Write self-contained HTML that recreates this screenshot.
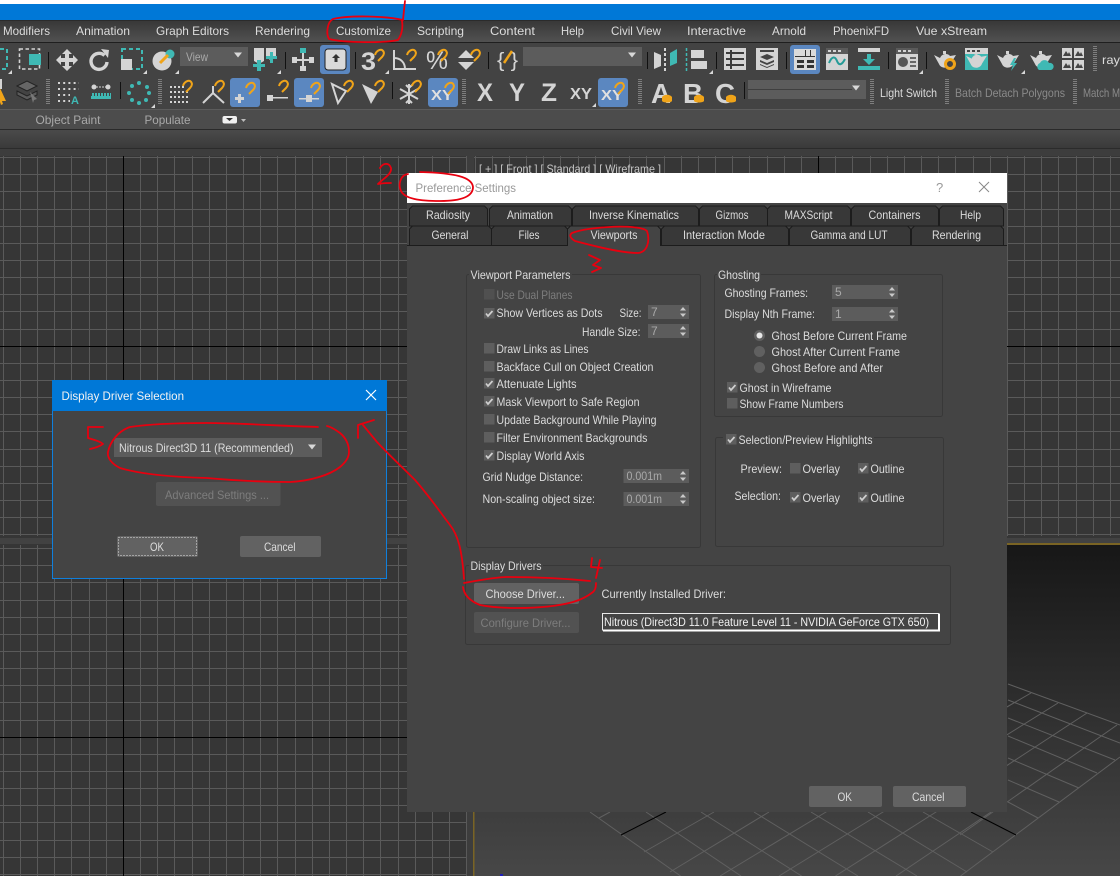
<!DOCTYPE html>
<html><head><meta charset="utf-8"><title>Display driver selection</title>
<style>
html,body{margin:0;padding:0;background:#363636;width:1120px;height:876px;overflow:hidden}
svg{display:block;font-family:"Liberation Sans",sans-serif;font-size:12px;overflow:hidden}
text{fill:#dcdcdc;white-space:pre}
.d{fill:#7d7d7d}
.s{fill:#a9a9a9}
.g{fill:#d4d4d4}
.t{fill:#3fb9b4}
.r{fill:none;stroke:#e8000f;stroke-width:1.8;stroke-linecap:round;stroke-linejoin:round}
.ln{fill:none;stroke:#5a5a5a;stroke-width:1}
.p{fill:none;stroke:#606060;stroke-width:1}
.bx{fill:none;stroke:#383838;stroke-width:1}
.tab{fill:#383838;stroke:#1c1c1c;stroke-width:1}
</style></head><body>
<svg width="1120" height="876" viewBox="0 0 1120 876" xmlns="http://www.w3.org/2000/svg">
<defs>
<linearGradient id="menu" x1="0" y1="0" x2="0" y2="1"><stop offset="0" stop-color="#383838"/><stop offset="1" stop-color="#515151"/></linearGradient>
<linearGradient id="bar2" x1="0" y1="0" x2="0" y2="1"><stop offset="0" stop-color="#4a4a4a"/><stop offset="1" stop-color="#3a3a3a"/></linearGradient>
<linearGradient id="persp" x1="0" y1="0" x2="0" y2="1"><stop offset="0" stop-color="#171717"/><stop offset="1" stop-color="#474747"/></linearGradient>
<path id="m" fill="none" stroke="#f0a419" stroke-width="2" d="M0 5C1 1 5-1 7 0C10 2 9 5 7 7L3 11"/>
<path id="f" fill="#d8d8d8" d="M4 0V4H0z"/>
<g id="c0"><rect width="10.5" height="10.5" fill="#5e5e5e"/></g>
<g id="c1"><rect width="10.5" height="10.5" fill="#5e5e5e"/><path d="M2 5.5L4 8L8.5 3" fill="none" stroke="#cfcfcf" stroke-width="1.7"/></g>
<path id="arr" fill="#c8c8c8" d="M-3 -1.5L0-5L3-1.5zM-3 1.5L0 5L3 1.5z"/>
<path id="dn" fill="#d8d8d8" d="M-4-2.5H4L0 2.5z"/>
<g id="dot"><path stroke="#b8b8b8" stroke-width="1" stroke-dasharray="1 1" fill="none" d="M0 0V26M2 0V26"/></g>
<g id="pot"><path class="g" d="M0 5L6 8C8 3 14 3 16 6L22 5L17 13C15 19 7 19 5 14z"/><path class="g" d="M9 1h3v3H9z"/></g>
<g id="hd"><rect width="22" height="6" fill="#5a5a5a"/><path fill="#d4d4d4" d="M2 2h3v2H2zM7 2h3v2H7zM12 2h3v2h-3z"/></g>
<g id="ph"><rect width="10" height="10" class="g"/><path fill="#444" d="M1 8l3-5 2 3 1-2 2 4z"/></g>
</defs>

<!-- top bars -->
<rect width="1120" height="4" fill="#fff"/>
<rect y="4" width="1120" height="16" fill="#0078d7"/>
<rect y="20" width="1120" height="1" fill="#2b2b2b"/>
<rect y="21" width="1120" height="21" fill="url(#menu)"/>
<rect y="42" width="1120" height="1" fill="#1f1f1f"/>
<rect y="43" width="1120" height="66" fill="#434343"/>
<rect y="109" width="1120" height="1" fill="#5c5c5c"/>
<rect y="110" width="1120" height="19" fill="#4c4c4c"/>
<rect y="129" width="1120" height="1" fill="#2a2a2a"/>
<rect y="130" width="1120" height="18" fill="url(#bar2)"/>
<rect y="148" width="1120" height="1" fill="#2b2b2b"/>
<rect y="149" width="1120" height="7" fill="#3d3d3d"/>

<!-- menu -->
<text x="3" y="35" textLength="47" lengthAdjust="spacingAndGlyphs">Modifiers</text>
<text x="76" y="35" textLength="54" lengthAdjust="spacingAndGlyphs">Animation</text>
<text x="156" y="35" textLength="73" lengthAdjust="spacingAndGlyphs">Graph Editors</text>
<text x="255" y="35" textLength="55" lengthAdjust="spacingAndGlyphs">Rendering</text>
<text x="336" y="35" textLength="55" lengthAdjust="spacingAndGlyphs">Customize</text>
<text x="417" y="35" textLength="47" lengthAdjust="spacingAndGlyphs">Scripting</text>
<text x="490" y="35" textLength="45" lengthAdjust="spacingAndGlyphs">Content</text>
<text x="561" y="35" textLength="23" lengthAdjust="spacingAndGlyphs">Help</text>
<text x="611" y="35" textLength="50" lengthAdjust="spacingAndGlyphs">Civil View</text>
<text x="687" y="35" textLength="59" lengthAdjust="spacingAndGlyphs">Interactive</text>
<text x="772" y="35" textLength="34" lengthAdjust="spacingAndGlyphs">Arnold</text>
<text x="833" y="35" textLength="56" lengthAdjust="spacingAndGlyphs">PhoenixFD</text>
<text x="916" y="35" textLength="71" lengthAdjust="spacingAndGlyphs">Vue xStream</text>

<!-- toolbar row 1 -->
<path d="M0 49H7V69H0" fill="none" stroke="#3fb9b4" stroke-width="2" stroke-dasharray="4 3"/>
<rect x="19.5" y="49" width="20" height="20" fill="none" stroke="#d4d4d4" stroke-width="1.6" stroke-dasharray="3.5 2.5"/>
<rect x="29" y="54" width="12" height="11" class="t"/>
<use href="#f" x="8" y="70"/>
<rect x="48" y="52" width="1" height="17" fill="#111"/>
<path class="g" d="M67 49l5 5h-3v4h4v-3l5 5-5 5v-3h-4v4h3l-5 5-5-5h3v-4h-4v3l-5-5 5-5v3h4v-4h-3z"/>
<path fill="none" stroke="#d4d4d4" stroke-width="3.4" d="M104.5 55.5A8 8 0 1 0 107 62"/>
<path class="g" d="M101 49l8 1-1 8z"/>
<rect x="122" y="49" width="20" height="20" fill="none" stroke="#3fb9b4" stroke-width="2" stroke-dasharray="4 3"/>
<rect x="121" y="59" width="11" height="11" class="g"/>
<use href="#f" x="143" y="70"/>
<circle cx="162" cy="61" r="9.5" class="g"/><circle cx="170" cy="54" r="4.5" class="t"/>
<path d="M160 63l8-8" stroke="#f0a419" stroke-width="3"/>
<use href="#f" x="175" y="70"/>
<rect x="180" y="47" width="68" height="19" fill="#5c5c5c"/>
<text x="186" y="61" class="s" textLength="22" lengthAdjust="spacingAndGlyphs">View</text>
<use href="#dn" x="238" y="55"/>
<path class="g" d="M254 48h10v13l-5 3-5-3zM266 48h10v8l-5 5-5-5z"/>
<path class="t" d="M257 60h4v4h4v3h-4v4h-4v-4h-4v-3h4zM270 52h3v4h4v3h-4v4h-3v-4h-4v-3h4z"/>
<use href="#f" x="277" y="70"/>
<rect x="285" y="52" width="1" height="17" fill="#111"/>
<path fill="none" stroke="#d4d4d4" stroke-width="2" d="M303 52V70M293 60H313"/>
<rect x="300" y="48" width="6" height="5" class="t"/><rect x="292" y="57" width="5" height="6" class="g"/><rect x="309" y="57" width="5" height="6" class="g"/><rect x="300" y="66" width="6" height="5" class="g"/>
<rect x="320" y="45" width="30" height="29" rx="3" fill="#5b87c0"/>
<rect x="325" y="49" width="21" height="21" rx="3" fill="#dadada" stroke="#222"/>
<path fill="#333" d="M332 58l4-4 4 4h-2.5v4h-3v-4z"/>
<rect x="355" y="52" width="1" height="17" fill="#111"/>
<text x="361" y="70" style="font-size:25px;font-weight:bold;fill:#d4d4d4" textLength="15" lengthAdjust="spacingAndGlyphs">3</text><use href="#m" x="375" y="50"/>
<use href="#f" x="385" y="70"/>
<path fill="none" stroke="#d4d4d4" stroke-width="2" d="M394 50V69H416M394 58C401 58 405 63 405 69"/><use href="#m" x="407" y="50"/>
<text x="426" y="69" style="font-size:25px;fill:#d4d4d4" textLength="22" lengthAdjust="spacingAndGlyphs">%</text><use href="#m" x="438" y="50"/>
<path class="g" d="M458 58l8-8 8 8zM458 62h16l-8 8z"/><use href="#m" x="471" y="50"/>
<rect x="488" y="52" width="1" height="17" fill="#111"/>
<text x="497" y="67" style="font-size:20px;fill:#d4d4d4" textLength="21" lengthAdjust="spacingAndGlyphs">{ }</text>
<path d="M504 63l8-12" stroke="#f0a419" stroke-width="2.5"/>
<rect x="523" y="47" width="119" height="19" fill="#5c5c5c"/><use href="#dn" x="632" y="55"/>
<rect x="647" y="52" width="1" height="17" fill="#111"/>
<path class="g" d="M654 52l7 3v11l-7 3z"/><path class="t" d="M677 49l-7 4v13l7-3z"/><path stroke="#d4d4d4" stroke-width="2" stroke-dasharray="3 2" d="M665 48V72"/>
<path stroke="#3fb9b4" stroke-width="1.5" stroke-dasharray="3 2" d="M686.5 48V71"/>
<rect x="691" y="50" width="13" height="8" class="g"/><rect x="691" y="61" width="16" height="8" class="g"/><use href="#f" x="709" y="70"/>
<rect x="716" y="52" width="1" height="17" fill="#111"/>
<rect x="724" y="48" width="22" height="22" class="g"/>
<path stroke="#3c3c3c" stroke-width="2" d="M726 53H744M726 59H744M726 65H744M731 50V69"/>
<rect x="756" y="48" width="22" height="22" class="g"/>
<path fill="#444" d="M760 50h14v2h-14zM767 54l7 3-7 3-7-3zM760 60l7 3 7-3v2l-7 3-7-3zM760 64l7 3 7-3v1l-7 3-7-3z"/>
<rect x="786" y="52" width="1" height="17" fill="#111"/>
<rect x="790" y="45" width="30" height="29" rx="3" fill="#5b87c0"/>
<rect x="794" y="49" width="22" height="21" fill="#dadada"/>
<path fill="#333" d="M795 56h20v1h-20zM805 50h1v6h-1zM810 50h1v6h-1zM797 60h7v3h-7zM807 60h7v3h-7zM797 65h7v3h-7zM807 65h7v3h-7z"/>
<rect x="826" y="48" width="22" height="22" class="g"/><use href="#hd" x="826" y="48"/>
<path d="M829 63c3-7 6-7 8-2s5 4 8-2" fill="none" stroke="#259b97" stroke-width="2"/>
<rect x="858" y="48" width="22" height="4" class="g"/><rect x="858" y="66" width="22" height="4" class="t"/>
<path class="t" d="M867 54h4v5h4l-6 6-6-6h4z"/>
<rect x="888" y="52" width="1" height="17" fill="#111"/>
<rect x="896" y="48" width="22" height="22" class="g"/><use href="#hd" x="896" y="48"/>
<circle cx="903" cy="62" r="5" fill="#555"/><path stroke="#444" stroke-width="1.5" d="M910 58h6M910 62h6M910 66h6"/>
<use href="#f" x="919" y="70"/>
<rect x="926" y="52" width="1" height="17" fill="#111"/>
<use href="#pot" x="934" y="50"/><circle cx="950" cy="64" r="4.5" fill="#434343" stroke="#f0a419" stroke-width="3"/>
<rect x="965" y="48" width="23" height="22" class="t"/><rect x="965" y="48" width="23" height="6" class="g"/><path fill="#444" d="M967 50h3v2h-3zM972 50h3v2h-3zM977 50h3v2h-3z"/>
<g transform="translate(966 51) scale(.95)"><use href="#pot"/></g>
<use href="#pot" x="997" y="50"/><path fill="#3fb9b4" d="M1014 58l-4 7h3l-2 6 6-8h-3l2-5z"/>
<use href="#f" x="1021" y="70"/>
<use href="#pot" x="1030" y="50"/><path class="t" d="M1039 70a4 4 0 0 1 1-7a5 5 0 0 1 9 0a3.5 3.5 0 0 1 2 7z"/>
<use href="#ph" x="1062" y="48"/><use href="#ph" x="1074" y="48"/><use href="#ph" x="1062" y="60"/><use href="#ph" x="1074" y="60"/>
<use href="#dot" x="1094" y="46"/>
<text x="1102" y="64" textLength="18" lengthAdjust="spacingAndGlyphs">ray</text>

<!-- toolbar row 2 -->
<path fill="#f0a419" d="M0 88l6 13h-4l1 3-2 1-1-3z"/><rect x="0" y="79" width="2" height="10" fill="#d4d4d4"/>
<path fill="#666" stroke="#222" d="M17 86l10-5 10 5-10 5z"/><path fill="#5a5a5a" stroke="#222" d="M17 91l10 5 10-5 0 4-10 5-10-5z"/>
<path fill="#777" d="M30 92l7 7-3 1-1 3z"/>
<use href="#dot" x="47" y="79"/>
<path stroke="#d4d4d4" stroke-width="2" stroke-dasharray="2 3.2" d="M58 83H79M58 89H79M58 95H70M58 101H70"/>
<text x="71" y="104" style="font-weight:bold;font-size:11px;fill:#3fb9b4">A</text>
<circle cx="94" cy="87" r="2.5" class="g"/><circle cx="108" cy="87" r="2.5" class="g"/><path stroke="#d4d4d4" stroke-dasharray="2 1" d="M96 87h10"/>
<path class="t" d="M91 93h20v6H91z"/><path stroke="#434343" stroke-dasharray="1 2" stroke-width="3" d="M91 94.5h20"/>
<rect x="120" y="82" width="1" height="17" fill="#111"/>
<g class="t"><circle cx="139" cy="83" r="2"/><circle cx="147" cy="87" r="2"/><circle cx="149" cy="93" r="2"/><circle cx="146" cy="100" r="2"/><circle cx="139" cy="103" r="2"/><circle cx="132" cy="100" r="2"/><circle cx="129" cy="93" r="2"/><circle cx="132" cy="86" r="2"/></g>
<use href="#f" x="151" y="104"/>
<use href="#dot" x="159" y="79"/>
<path stroke="#d4d4d4" stroke-width="2" stroke-dasharray="2 2" d="M170 87H186M170 92H190M170 97H190M170 102H190"/><use href="#m" x="183" y="81"/>
<path fill="none" stroke="#d4d4d4" stroke-width="2" d="M213 93V86M213 93L203 103M213 93L224 103"/><use href="#m" x="215" y="81"/>
<rect x="230" y="78" width="30" height="29" rx="3" fill="#5b87c0"/><use href="#m" x="246" y="83"/>
<path class="g" d="M238 94h3v3h3v3h-3v3h-3v-3h-3v-3h3z"/>
<use href="#m" x="279" y="81"/><rect x="267" y="95" width="6" height="6" class="g"/><rect x="272" y="97" width="16" height="1.5" class="g"/>
<rect x="294" y="78" width="30" height="29" rx="3" fill="#5b87c0"/><use href="#m" x="311" y="83"/>
<rect x="299" y="98" width="20" height="1.5" class="g"/><rect x="306" y="95" width="6" height="7" class="g"/>
<path fill="none" stroke="#d4d4d4" stroke-width="2" d="M332 84L346 91L338 103z"/><use href="#m" x="344" y="81"/>
<path class="g" d="M362 84L378 92L371 104z"/><use href="#m" x="375" y="81"/>
<rect x="392" y="82" width="1" height="17" fill="#111"/>
<path stroke="#d4d4d4" stroke-width="2" fill="none" d="M409 84V104M400 89L418 99M400 99L418 89M406 85l3 3 3-3M406 103l3-3 3 3"/><use href="#m" x="412" y="81"/>
<rect x="428" y="78" width="30" height="29" rx="3" fill="#5b87c0"/>
<text x="431" y="100" style="font-weight:bold;font-size:15px;fill:#e0e0e0" textLength="22" lengthAdjust="spacingAndGlyphs">XY</text><use href="#m" x="445" y="83"/>
<use href="#dot" x="463" y="79"/>
<text x="477" y="101" style="font-weight:bold;font-size:25px;fill:#d4d4d4" textLength="16" lengthAdjust="spacingAndGlyphs">X</text>
<text x="509" y="101" style="font-weight:bold;font-size:25px;fill:#d4d4d4" textLength="16" lengthAdjust="spacingAndGlyphs">Y</text>
<text x="541" y="101" style="font-weight:bold;font-size:25px;fill:#d4d4d4" textLength="16" lengthAdjust="spacingAndGlyphs">Z</text>
<text x="570" y="99" style="font-weight:bold;font-size:16px;fill:#d4d4d4" textLength="22" lengthAdjust="spacingAndGlyphs">XY</text>
<use href="#f" x="592" y="103"/>
<rect x="598" y="78" width="30" height="29" rx="3" fill="#5b87c0"/>
<text x="601" y="100" style="font-weight:bold;font-size:15px;fill:#e0e0e0" textLength="22" lengthAdjust="spacingAndGlyphs">XY</text><use href="#m" x="615" y="83"/>
<use href="#dot" x="639" y="79"/>
<text x="651" y="103" style="font-weight:bold;font-size:28px;fill:#d4d4d4" textLength="20" lengthAdjust="spacingAndGlyphs">A</text>
<text x="683" y="103" style="font-weight:bold;font-size:28px;fill:#d4d4d4" textLength="20" lengthAdjust="spacingAndGlyphs">B</text>
<text x="715" y="103" style="font-weight:bold;font-size:28px;fill:#d4d4d4" textLength="20" lengthAdjust="spacingAndGlyphs">C</text>
<g fill="#f0a419"><path d="M662 97c2-3 8-3 10 0v4c-1 2-9 2-10 0z"/><path d="M694 97c2-3 8-3 10 0v4c-1 2-9 2-10 0z"/><path d="M726 97c2-3 8-3 10 0v4c-1 2-9 2-10 0z"/></g>
<rect x="744" y="82" width="1" height="17" fill="#111"/>
<rect x="748" y="80" width="118" height="19" fill="#5c5c5c"/><rect x="748" y="89" width="104" height="1" fill="#3f3f3f"/><use href="#dn" x="856" y="88"/>
<use href="#dot" x="871" y="79"/>
<text x="880" y="97" textLength="57" lengthAdjust="spacingAndGlyphs">Light Switch</text>
<use href="#dot" x="946" y="79"/>
<text x="955" y="97" style="fill:#8a8a8a" textLength="110" lengthAdjust="spacingAndGlyphs">Batch Detach Polygons</text>
<use href="#dot" x="1074" y="79"/>
<text x="1083" y="97" style="fill:#8a8a8a" textLength="37" lengthAdjust="spacingAndGlyphs">Match M</text>

<!-- ribbon -->
<text x="35.5" y="124" class="s" textLength="65" lengthAdjust="spacingAndGlyphs">Object Paint</text>
<text x="144.5" y="124" class="s" textLength="46" lengthAdjust="spacingAndGlyphs">Populate</text>
<rect x="222.5" y="116" width="14.5" height="7.5" rx="2" fill="#f0f0f0"/><path fill="#333" d="M226 118h7l-3.5 3z"/><path fill="#bbb" d="M241 119h5l-2.5 3z"/>

<!-- viewports -->
<rect x="0" y="156" width="467" height="382" fill="#363636"/>
<rect x="474" y="156" width="646" height="382" fill="#363636"/>
<rect x="0" y="538" width="1120" height="6" fill="#424242"/>
<rect x="467" y="156" width="7" height="720" fill="#3d3d3d"/>
<rect x="0" y="544" width="467" height="332" fill="#363636"/>
<!-- top-left grid -->
<path class="ln" d="M3.5 156V536M20.5 156V536M37.5 156V536M54.5 156V536M71.5 156V536M89.5 156V536M106.5 156V536M140.5 156V536M157.5 156V536M174.5 156V536M192.5 156V536M209.5 156V536M226.5 156V536M243.5 156V536M260.5 156V536M277.5 156V536M295.5 156V536M312.5 156V536M329.5 156V536M346.5 156V536M363.5 156V536M380.5 156V536M398.5 156V536M415.5 156V536M432.5 156V536M449.5 156V536M466.5 156V536"/>
<path class="ln" d="M0 157.5H467M0 174.5H467M0 191.5H467M0 209.5H467M0 226.5H467M0 243.5H467M0 260.5H467M0 277.5H467M0 294.5H467M0 311.5H467M0 329.5H467M0 363.5H467M0 380.5H467M0 397.5H467M0 414.5H467M0 431.5H467M0 449.5H467M0 466.5H467M0 483.5H467M0 500.5H467M0 517.5H467M0 534.5H467"/>
<!-- bottom-left grid -->
<path class="ln" d="M3.5 545V876M20.5 545V876M37.5 545V876M54.5 545V876M71.5 545V876M89.5 545V876M106.5 545V876M140.5 545V876M157.5 545V876M174.5 545V876M192.5 545V876M209.5 545V876M226.5 545V876M243.5 545V876M260.5 545V876M277.5 545V876M295.5 545V876M312.5 545V876M329.5 545V876M346.5 545V876M363.5 545V876M380.5 545V876M398.5 545V876M415.5 545V876M432.5 545V876M449.5 545V876M466.5 545V876"/>
<path class="ln" d="M0 548.5H467M0 565.5H467M0 582.5H467M0 600.5H467M0 617.5H467M0 634.5H467M0 651.5H467M0 668.5H467M0 685.5H467M0 702.5H467M0 720.5H467M0 754.5H467M0 771.5H467M0 788.5H467M0 805.5H467M0 822.5H467M0 840.5H467M0 857.5H467M0 874.5H467"/>
<path stroke="#000" stroke-width="1" d="M123.5 156V536M123.5 545V876M0 346.5H467M0 737.5H467"/>
<path class="ln" d="M474 157.5H1120M474 174.5H1120M474 191.5H1120M474 209.5H1120M474 226.5H1120M474 243.5H1120M474 260.5H1120M474 277.5H1120M474 294.5H1120M474 311.5H1120M474 329.5H1120M474 363.5H1120M474 380.5H1120M474 397.5H1120M474 414.5H1120M474 431.5H1120M474 449.5H1120M474 466.5H1120M474 483.5H1120M474 500.5H1120M474 517.5H1120M474 534.5H1120"/>
<path class="ln" d="M475.5 156V536M492.5 156V536M509.5 156V536M526.5 156V536M543.5 156V536M560.5 156V536M578.5 156V536M595.5 156V536M612.5 156V536M629.5 156V536M646.5 156V536M664.5 156V536M681.5 156V536M698.5 156V536M715.5 156V536M732.5 156V536M749.5 156V536M767.5 156V536M784.5 156V536M801.5 156V536M835.5 156V536M852.5 156V536M870.5 156V536M887.5 156V536M904.5 156V536M921.5 156V536M938.5 156V536M955.5 156V536M973.5 156V536M990.5 156V536M1007.5 156V536M1024.5 156V536M1041.5 156V536M1058.5 156V536M1076.5 156V536M1093.5 156V536M1110.5 156V536"/>
<path stroke="#000" d="M818.5 156V536M474 346.5H1120"/>
<rect x="474" y="538" width="646" height="5" fill="#424242"/>
<text x="479" y="173" style="fill:#c8c8c8" textLength="182" lengthAdjust="spacingAndGlyphs">[ + ] [ Front ] [ Standard ] [ Wireframe ]</text>
<rect x="474" y="545" width="646" height="331" fill="url(#persp)"/>
<rect x="474" y="543" width="646" height="2" fill="#7a6424"/>
<rect x="473" y="543" width="1.5" height="333" fill="#7a6424"/>
<path class="p" d="M590 812L680.6 876M646 812L741 876M701 812L801.6 876M754 812L858 876M811 812L917 876M868 812L967 872M923 812L993 852M1008 802L1038 818M1008 780L1059 802M1008 758L1079 788M1008 736L1097 773M1008 718L1115 760M1008 700L1120 743M1008 684L1120 725"/>
<path class="p" d="M1120 757L960.5 876M991 812L896 876M1117 725L960 835M936 812L835.4 876M1087 713L936 812M883 812L779 876M1058 703L883 812M826 812L720 876M1031 693L826 812M769 812L670 872M714 812L644 852M610 812L599 818"/>
<path stroke="#000" d="M971 812L1016 835M666 812L621 835"/>
<path stroke="#1010e0" stroke-width="1.5" d="M500 875h3"/>

<!-- Preference dialog -->
<rect x="407" y="173" width="600" height="639" fill="#444444"/>
<rect x="407" y="173" width="600" height="30" fill="#ffffff"/>
<text x="415.5" y="192" style="fill:#999" textLength="100.5" lengthAdjust="spacingAndGlyphs">Preference Settings</text>
<text x="936" y="192" style="fill:#999;font-size:13px">?</text>
<path stroke="#888" stroke-width="1" d="M979 182L989 192M989 182L979 192"/>
<!-- tabs -->
<g>
<path class="tab" d="M409.5 226V209l3-3h72l3 3V226z"/>
<path class="tab" d="M489.5 226V209l3-3h76l3 3V226z"/>
<path class="tab" d="M572.5 226V209l3-3h120l3 3V226z"/>
<path class="tab" d="M699.5 226V209l3-3h62l3 3V226z"/>
<path class="tab" d="M767.5 226V209l3-3h77l3 3V226z"/>
<path class="tab" d="M851.5 226V209l3-3h81l3 3V226z"/>
<path class="tab" d="M939.5 226V209l3-3h58l3 3V226z"/>
<rect x="407" y="245" width="600" height="1" fill="#1c1c1c"/>
<path class="tab" d="M409.5 245.5V229l3-3h76l3 3V245.5z"/>
<path class="tab" d="M491.5 245.5V229l3-3h70l3 3V245.5z"/>
<path class="tab" d="M661.5 245.5V229l3-3h121l3 3V245.5z"/>
<path class="tab" d="M789.5 245.5V229l3-3h115l3 3V245.5z"/>
<path class="tab" d="M911.5 245.5V229l3-3h86l3 3V245.5z"/>
<path fill="#444" stroke="#1c1c1c" d="M567.5 246V229l3-3h87l3 3V246"/>
<rect x="568" y="245" width="92" height="2" fill="#444"/>
</g>
<text x="426" y="219" textLength="44" lengthAdjust="spacingAndGlyphs">Radiosity</text>
<text x="507" y="219" textLength="46" lengthAdjust="spacingAndGlyphs">Animation</text>
<text x="589" y="219" textLength="90" lengthAdjust="spacingAndGlyphs">Inverse Kinematics</text>
<text x="715.5" y="219" textLength="33" lengthAdjust="spacingAndGlyphs">Gizmos</text>
<text x="784.5" y="219" textLength="48" lengthAdjust="spacingAndGlyphs">MAXScript</text>
<text x="868.5" y="219" textLength="52" lengthAdjust="spacingAndGlyphs">Containers</text>
<text x="960" y="219" textLength="21" lengthAdjust="spacingAndGlyphs">Help</text>
<text x="431.5" y="239" textLength="37" lengthAdjust="spacingAndGlyphs">General</text>
<text x="518.5" y="239" textLength="21" lengthAdjust="spacingAndGlyphs">Files</text>
<text x="590.5" y="239" textLength="47" lengthAdjust="spacingAndGlyphs">Viewports</text>
<text x="683" y="239" textLength="82" lengthAdjust="spacingAndGlyphs">Interaction Mode</text>
<text x="810.5" y="239" textLength="77" lengthAdjust="spacingAndGlyphs">Gamma and LUT</text>
<text x="932" y="239" textLength="49" lengthAdjust="spacingAndGlyphs">Rendering</text>

<!-- group boxes -->
<rect x="466.5" y="274.5" width="234" height="273" rx="2" class="bx"/>
<rect x="714.5" y="274.5" width="228" height="142" rx="2" class="bx"/>
<rect x="715.5" y="437.5" width="228" height="109" rx="2" class="bx"/>
<rect x="465.5" y="565.5" width="485" height="79" rx="2" class="bx"/>
<rect x="469" y="270" width="103" height="8" fill="#444"/>
<rect x="717" y="270" width="44" height="8" fill="#444"/>
<rect x="723" y="434" width="151" height="8" fill="#444"/>
<rect x="469" y="561" width="74" height="8" fill="#444"/>
<text x="470.5" y="279" textLength="100" lengthAdjust="spacingAndGlyphs">Viewport Parameters</text>
<text x="718" y="279" textLength="42" lengthAdjust="spacingAndGlyphs">Ghosting</text>
<text x="470.5" y="570" textLength="71" lengthAdjust="spacingAndGlyphs">Display Drivers</text>

<!-- viewport params -->
<rect x="484" y="289" width="10.5" height="10.5" fill="#505050"/>
<use href="#c1" x="484" y="308"/><use href="#c0" x="484" y="343"/><use href="#c0" x="484" y="361"/><use href="#c1" x="484" y="378"/><use href="#c1" x="484" y="396"/><use href="#c0" x="484" y="414"/><use href="#c0" x="484" y="432"/><use href="#c1" x="484" y="450"/>
<text x="496.5" y="299" class="d" textLength="76" lengthAdjust="spacingAndGlyphs">Use Dual Planes</text>
<text x="496.5" y="317" textLength="106" lengthAdjust="spacingAndGlyphs">Show Vertices as Dots</text>
<text x="619.5" y="317" textLength="22" lengthAdjust="spacingAndGlyphs">Size:</text>
<text x="582" y="336" textLength="58.5" lengthAdjust="spacingAndGlyphs">Handle Size:</text>
<text x="496.5" y="353" textLength="92" lengthAdjust="spacingAndGlyphs">Draw Links as Lines</text>
<text x="496.5" y="371" textLength="157" lengthAdjust="spacingAndGlyphs">Backface Cull on Object Creation</text>
<text x="496.5" y="388" textLength="80" lengthAdjust="spacingAndGlyphs">Attenuate Lights</text>
<text x="496.5" y="406" textLength="143" lengthAdjust="spacingAndGlyphs">Mask Viewport to Safe Region</text>
<text x="496.5" y="424" textLength="160" lengthAdjust="spacingAndGlyphs">Update Background While Playing</text>
<text x="496.5" y="442" textLength="151" lengthAdjust="spacingAndGlyphs">Filter Environment Backgrounds</text>
<text x="496.5" y="460" textLength="88" lengthAdjust="spacingAndGlyphs">Display World Axis</text>
<text x="482.5" y="481" textLength="100.5" lengthAdjust="spacingAndGlyphs">Grid Nudge Distance:</text>
<text x="482.5" y="503" textLength="112.5" lengthAdjust="spacingAndGlyphs">Non-scaling object size:</text>
<rect x="648" y="305" width="41" height="14" fill="#5c5c5c"/><text x="651" y="316" class="s">7</text><use href="#arr" x="683" y="312"/>
<rect x="648" y="324" width="41" height="14" fill="#5c5c5c"/><text x="651" y="335" class="s">7</text><use href="#arr" x="683" y="331"/>
<rect x="623.5" y="469" width="65.5" height="14" fill="#5c5c5c"/><text x="626.5" y="480" class="s" textLength="35.5" lengthAdjust="spacingAndGlyphs">0.001m</text><use href="#arr" x="683" y="476"/>
<rect x="623.5" y="492" width="65.5" height="14" fill="#5c5c5c"/><text x="626.5" y="503" class="s" textLength="35.5" lengthAdjust="spacingAndGlyphs">0.001m</text><use href="#arr" x="683" y="499"/>

<!-- ghosting -->
<text x="724.5" y="297" textLength="83.5" lengthAdjust="spacingAndGlyphs">Ghosting Frames:</text>
<text x="724.5" y="318" textLength="90.5" lengthAdjust="spacingAndGlyphs">Display Nth Frame:</text>
<rect x="832" y="285" width="66" height="14" fill="#5c5c5c"/><text x="835" y="296" class="s">5</text><use href="#arr" x="892" y="292"/>
<rect x="832" y="307" width="66" height="14" fill="#5c5c5c"/><text x="835" y="318" class="s">1</text><use href="#arr" x="892" y="314"/>
<circle cx="759.5" cy="335.5" r="5.5" fill="#606060"/><circle cx="759.5" cy="335.5" r="3" fill="#e8e8e8"/>
<circle cx="759.5" cy="351.5" r="5.5" fill="#606060"/>
<circle cx="759.5" cy="367.5" r="5.5" fill="#606060"/>
<text x="771.5" y="340" textLength="135.5" lengthAdjust="spacingAndGlyphs">Ghost Before Current Frame</text>
<text x="771.5" y="356" textLength="128.5" lengthAdjust="spacingAndGlyphs">Ghost After Current Frame</text>
<text x="771.5" y="372" textLength="111.5" lengthAdjust="spacingAndGlyphs">Ghost Before and After</text>
<use href="#c1" x="727" y="382"/><use href="#c0" x="727" y="398"/>
<text x="739.5" y="392" textLength="92" lengthAdjust="spacingAndGlyphs">Ghost in Wireframe</text>
<text x="739.5" y="408" textLength="104" lengthAdjust="spacingAndGlyphs">Show Frame Numbers</text>

<!-- selection -->
<use href="#c1" x="726" y="434"/>
<text x="738.5" y="444" textLength="134" lengthAdjust="spacingAndGlyphs">Selection/Preview Highlights</text>
<text x="740.5" y="473" textLength="41.5" lengthAdjust="spacingAndGlyphs">Preview:</text>
<text x="734.5" y="500" textLength="46.5" lengthAdjust="spacingAndGlyphs">Selection:</text>
<use href="#c0" x="790" y="463"/><use href="#c1" x="858" y="463"/><use href="#c1" x="790" y="492"/><use href="#c1" x="858" y="492"/>
<text x="802.5" y="473" textLength="37.5" lengthAdjust="spacingAndGlyphs">Overlay</text>
<text x="870.5" y="473" textLength="34" lengthAdjust="spacingAndGlyphs">Outline</text>
<text x="802.5" y="502" textLength="37.5" lengthAdjust="spacingAndGlyphs">Overlay</text>
<text x="870.5" y="502" textLength="34" lengthAdjust="spacingAndGlyphs">Outline</text>

<!-- drivers -->
<rect x="474" y="583" width="105" height="21" rx="2" fill="#626262"/>
<text x="485.5" y="598" textLength="79.5" lengthAdjust="spacingAndGlyphs">Choose Driver...</text>
<rect x="474" y="612" width="105" height="21" rx="2" fill="#525252"/>
<text x="480.5" y="627" class="d" textLength="90" lengthAdjust="spacingAndGlyphs">Configure Driver...</text>
<text x="601.5" y="598" textLength="124.5" lengthAdjust="spacingAndGlyphs">Currently Installed Driver:</text>
<rect x="602.5" y="613.5" width="336.5" height="16.5" fill="#444" stroke="#e8e8e8" stroke-width="1"/>
<path stroke="#fff" stroke-width="2" fill="none" d="M603 630.5H939V614"/>
<text x="604" y="626" style="fill:#f0f0f0" textLength="325" lengthAdjust="spacingAndGlyphs">Nitrous (Direct3D 11.0 Feature Level 11 - NVIDIA GeForce GTX 650)</text>
<rect x="809" y="786" width="73" height="21" rx="2" fill="#626262"/>
<text x="837.5" y="801" textLength="14.5" lengthAdjust="spacingAndGlyphs">OK</text>
<rect x="893" y="786" width="73" height="21" rx="2" fill="#626262"/>
<text x="912" y="801" textLength="32.5" lengthAdjust="spacingAndGlyphs">Cancel</text>

<!-- Display Driver dialog -->
<rect x="52.5" y="380.5" width="334" height="198" fill="#444444" stroke="#0f7fdc" stroke-width="1"/>
<rect x="52" y="380" width="335" height="31" fill="#0078d7"/>
<text x="61.5" y="400" style="fill:#f2f2f2" textLength="122.5" lengthAdjust="spacingAndGlyphs">Display Driver Selection</text>
<path stroke="#fff" stroke-width="1.2" d="M366 390L376 400M376 390L366 400"/>
<rect x="114" y="438" width="208" height="19" fill="#5c5c5c"/>
<text x="119" y="452" textLength="174.5" lengthAdjust="spacingAndGlyphs">Nitrous Direct3D 11 (Recommended)</text>
<use href="#dn" x="312" y="447"/>
<rect x="156" y="482" width="124.5" height="24" rx="2" fill="#525252"/>
<text x="165" y="499" class="d" textLength="104" lengthAdjust="spacingAndGlyphs">Advanced Settings ...</text>
<rect x="117" y="536" width="81" height="21" rx="2" fill="#626262"/>
<rect x="118.5" y="537.5" width="78" height="18" fill="none" stroke="#e4e4e4" stroke-dasharray="1 2"/>
<text x="150" y="551" textLength="14" lengthAdjust="spacingAndGlyphs">OK</text>
<rect x="240" y="536" width="81" height="21" rx="2" fill="#626262"/>
<text x="264" y="551" textLength="31.5" lengthAdjust="spacingAndGlyphs">Cancel</text>

<!-- red annotations -->
<path class="r" d="M405 1L404 10L403 20M403 20C385 16 350 15 333 19C327 22 326 34 329 39C345 43 385 43 398 40C402 34 403 27 402 21"/>
<path class="r" d="M380 168C383 163 389 162 391 168C392 174 384 178 378 184C383 183 387 183 391 183"/>
<path class="r" d="M408 174C400 175 398 185 401 191C405 199 420 201 440 201C460 201 473 197 473 187C472 177 455 173 420 172"/>
<path class="r" d="M572 233C590 226 640 224 647 231C650 240 648 252 638 253C620 253 590 245 575 241C570 238 569 235 572 233"/>
<path class="r" d="M589 255L600 260L593 265L601 268L592 272"/>
<path class="r" d="M464 583C480 580 500 577 507 577C540 577 570 579 590 581M596 583C596 588 595 590 593 592C588 596 580 600 573 602C555 607 535 608 517 608C500 608 490 607 480 605C470 601 464 595 463 587"/>
<path class="r" d="M592 558L591 567L602 568M600 560L596 578"/>
<path class="r" d="M363 425L377 442C390 456 400 465 415 480C430 497 440 512 450 525C458 535 462 550 464 579"/>
<path class="r" d="M374 420L358 425L358 438"/>
<path class="r" d="M318 427C280 426 240 423 207 423C180 423 150 424 130 427C118 431 110 442 108 452C107 458 112 464 120 468C140 474 170 477 207 478C240 481 265 482 290 482C310 481 330 475 340 467C346 462 349 457 349 452C349 445 346 438 340 433C336 430 331 427 327 426"/>
<path class="r" d="M103 427L88 427L88 438C94 440 100 441 103 444C100 446 95 448 90 449"/>
</svg>
</body></html>
